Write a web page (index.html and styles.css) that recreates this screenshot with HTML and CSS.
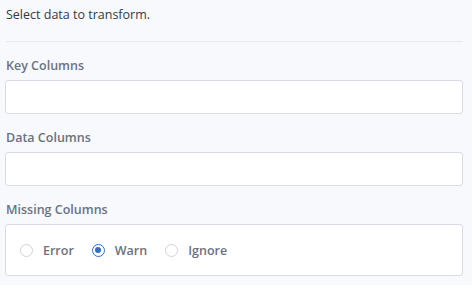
FILE: index.html
```html
<!DOCTYPE html>
<html>
<head>
<meta charset="utf-8">
<link rel="stylesheet" href="styles.css">
</head>
<body>
<div class="panel">
  <div class="intro">Select data to transform.</div>
  <div class="sep"></div>
  <div class="field">
    <div class="label">Key Columns</div>
    <div class="input"></div>
  </div>
  <div class="field">
    <div class="label">Data Columns</div>
    <div class="input"></div>
  </div>
  <div class="field">
    <div class="label">Missing Columns</div>
    <div class="radios">
      <div class="opt"><span class="radio"></span><span class="opt-text">Error</span></div>
      <div class="opt"><span class="radio checked"></span><span class="opt-text">Warn</span></div>
      <div class="opt"><span class="radio"></span><span class="opt-text">Ignore</span></div>
    </div>
  </div>
</div>
</body>
</html>
```
FILE: styles.css
```css
html, body {
  margin: 0;
  padding: 0;
  background: #ffffff;
}
body {
  font-family: "Open Sans", "Noto Sans", sans-serif;
  width: 474px;
  height: 289px;
  overflow: hidden;
}
.panel {
  width: 472px;
  height: 285px;
  background: #f7f9fd;
  box-sizing: border-box;
  padding: 6px 9px 0 5px;
}
.intro {
  font-size: 12.5px;
  color: #333a44;
  line-height: 18px;
  padding-left: 1px;
}
.sep {
  height: 1px;
  background: #e6e9f0;
  margin: 17px 0 0 1px;
}
.field {
  display: flex;
  flex-direction: column;
}
.label {
  font-size: 12.5px;
  font-weight: 600;
  color: #6c7280;
  line-height: 18px;
  padding-left: 1px;
  margin-top: 15px;
  margin-bottom: 5px;
}
.input {
  height: 32px;
  background: #ffffff;
  border: 1px solid #d9dce4;
  border-radius: 3px;
}
.radios {
  height: 50px;
  background: #ffffff;
  border: 1px solid #d9dce4;
  border-radius: 3px;
  display: flex;
  align-items: center;
  padding-left: 14px;
  gap: 18px;
}
.opt {
  display: flex;
  align-items: center;
  gap: 10px;
}
.radio {
  width: 13px;
  height: 13px;
  border: 1px solid #cfd3db;
  border-radius: 50%;
  background: #fff;
  box-sizing: border-box;
  position: relative;
}
.radio.checked {
  border: 1.5px solid #2f6fc7;
}
.radio.checked::after {
  content: "";
  position: absolute;
  left: 50%;
  top: 50%;
  width: 6px;
  height: 6px;
  margin: -3px 0 0 -3px;
  border-radius: 50%;
  background: #2f6fc7;
}
.opt-text {
  font-size: 12.5px;
  font-weight: 600;
  color: #6c7280;
}
```
